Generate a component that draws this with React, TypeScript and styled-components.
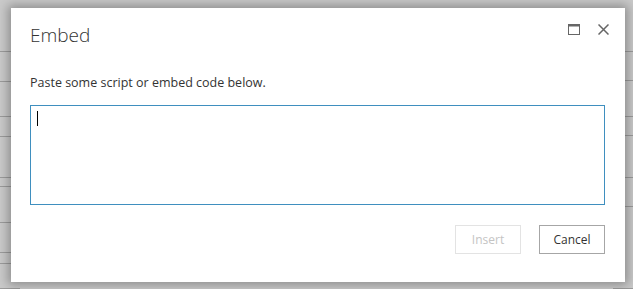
import styled, { createGlobalStyle } from 'styled-components';

const GlobalStyle = createGlobalStyle`
  html, body {
    margin: 0;
    padding: 0;
    width: 633px;
    height: 289px;
    overflow: hidden;
    background: #cacaca;
    font-family: "Open Sans", "Noto Sans", sans-serif;
  }
`;

const leftRows = [52, 30, 35, 20, 41, 9, 36, 30, 11, 25];
const rightRows = [52, 29, 36, 19, 42, 29, 82];

const App = () => {
  return (
    <Page>
      <GlobalStyle />
      <Backdrop>
        <Column>
          {leftRows.map((h, i) => (
            <Row key={i} $height={h} />
          ))}
        </Column>
        <Column>
          {rightRows.map((h, i) => (
            <Row key={i} $height={h} />
          ))}
        </Column>
      </Backdrop>
      <Overlay>
        <Dialog>
          <Header>
            <Title>Embed</Title>
            <Controls>
              <IconButton aria-label="Maximize">
                <svg width="12" height="11" viewBox="0 0 12 11">
                  <rect x="0.5" y="0.5" width="11" height="10" fill="none" stroke="#666" />
                  <rect x="0.5" y="0.5" width="11" height="2" fill="#666" />
                </svg>
              </IconButton>
              <IconButton aria-label="Close">
                <svg width="11" height="11" viewBox="0 0 11 11">
                  <path d="M0.5 0.5 L10.5 10.5 M10.5 0.5 L0.5 10.5" stroke="#666" strokeWidth="1.5" />
                </svg>
              </IconButton>
            </Controls>
          </Header>
          <Body>
            <Hint>Paste some script or embed code below.</Hint>
            <CodeBox>
              <Caret />
            </CodeBox>
          </Body>
          <Footer>
            <Button disabled>Insert</Button>
            <Button>Cancel</Button>
          </Footer>
        </Dialog>
      </Overlay>
    </Page>
  );
};

export default App;

const Page = styled.div`
  position: relative;
  width: 633px;
  height: 289px;
  overflow: hidden;
`;

const Backdrop = styled.div`
  display: flex;
  justify-content: space-between;
  height: 100%;
`;

const Column = styled.div`
  display: flex;
  flex-direction: column;
  width: 20px;
`;

const Row = styled.div<{ $height: number }>`
  height: ${(p) => p.$height}px;
  box-sizing: border-box;
  border-bottom: 1px solid #9c9c9c;
  flex-shrink: 0;
`;

const Overlay = styled.div`
  position: absolute;
  inset: 0;
  padding: 8px 8px 7px 11px;
  box-sizing: border-box;
  display: flex;
`;

const Dialog = styled.div`
  flex: 1;
  background: #fff;
  box-shadow: 0 0 10px 3px rgba(0, 0, 0, 0.3);
  display: flex;
  flex-direction: column;
  padding: 0 20px 0 19px;
  color: #333;
`;

const Header = styled.div`
  display: flex;
  justify-content: space-between;
  align-items: flex-start;
  height: 66px;
`;

const Title = styled.h1`
  margin: 14px 0 0;
  font-size: 19px;
  font-weight: 300;
  color: #333;
`;

const Controls = styled.div`
  display: flex;
  gap: 17px;
  margin-top: 15px;
  margin-right: -4px;
`;

const IconButton = styled.button`
  border: 0;
  background: none;
  padding: 0;
  width: 12px;
  height: 12px;
  display: flex;
  align-items: center;
  justify-content: center;
`;

const Body = styled.div`
  display: flex;
  flex-direction: column;
`;

const Hint = styled.p`
  margin: 0 0 13px;
  font-size: 12.5px;
  line-height: 18px;
  color: #333;
`;

const CodeBox = styled.div`
  height: 100px;
  box-sizing: border-box;
  border: 1px solid #3f8fbf;
  padding: 5px 6px;
`;

const Caret = styled.div`
  width: 1px;
  height: 15px;
  background: #000;
`;

const Footer = styled.div`
  display: flex;
  justify-content: flex-end;
  gap: 18px;
  margin-top: 20px;
`;

const Button = styled.button`
  width: 66px;
  height: 29px;
  box-sizing: border-box;
  background: #fff;
  border: 1px solid #a6a6a6;
  font-family: "Open Sans", "Noto Sans", sans-serif;
  font-size: 12px;
  color: #333;
  padding: 0;

  &:disabled {
    border-color: #e3e3e3;
    color: #c4c4c4;
  }
`;
